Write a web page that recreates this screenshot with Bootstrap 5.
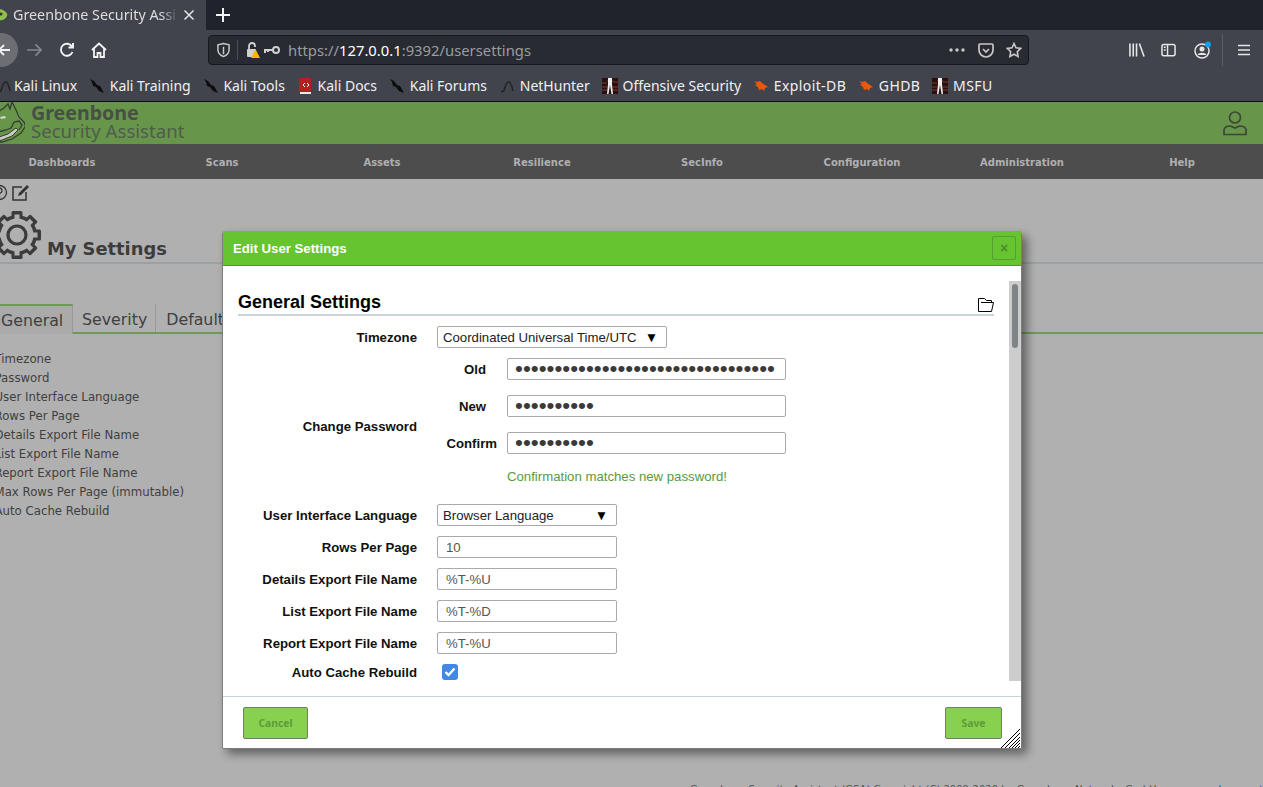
<!DOCTYPE html>
<html lang="en">
<head>
<meta charset="utf-8">
<title>Greenbone Security Assistant</title>
<link rel="stylesheet" href="https://cdn.jsdelivr.net/npm/bootstrap@5.3.0/dist/css/bootstrap.min.css">
<style>
html,body{height:787px;overflow:hidden;background:#b0b0b0}
body{font-family:"Liberation Sans",sans-serif;position:relative;color:#1a1a1a}
svg{display:block;flex:none}
.ffx{font-family:"Noto Sans",sans-serif;color:#f3f3f5}
.tabstrip{height:30px;background:#20232b}
.ftab{width:206px;height:30px;background:#42444d;font-size:14.3px;color:#ddd}
.ftab-title{width:165px;margin-left:3px;white-space:nowrap;overflow:hidden;-webkit-mask-image:linear-gradient(90deg,#000 90%,transparent);mask-image:linear-gradient(90deg,#000 90%,transparent)}
.tabclose{margin-left:5px}
.tabplus{margin-left:10px}
.ftoolbar{height:40px;background:#42444d}
.fleft{width:208px;flex:none}
.back-circle{width:34px;height:34px;flex:none;border-radius:50%;background:#6c6e74;margin-left:-16px;padding-right:8px}
.urlbar{width:821px;height:30px;background:#292b33;border:1px solid #17181d;border-radius:4px;font-size:14.8px;color:#9b9ca1}
.urlbar b{font-weight:400;color:#fff}
.urldiv{width:1px;height:20px;background:#4d4e55;margin-left:7px}
.ubicon-dots{margin-left:auto}
.ubicon-pocket{margin-left:13px}
.ubicon-star{margin-left:12px;margin-right:6px}
.tb-lib{margin-left:16px}
.tb-acct{margin-left:18px}
.tb-sep{width:1px;height:32px;background:#5c5d64;margin-left:10px}
.tb-menu{margin:0 13px 0 15px}
.bmarks{height:32px;background:#42444d;font-size:14px;border-bottom:1px solid #111;white-space:nowrap;color:#f0f0f2}
.bm-first{margin-left:-3px;margin-right:3px}
.bm-ico{margin-left:12px;margin-right:4.7px}
.bm-caps{letter-spacing:.4px}
.ghead{height:42px;background:#67964b}
.wolf{margin-right:6px}
.gname{font-family:"Noto Sans",sans-serif;white-space:nowrap}
.gnames{margin-top:-4px}
.gname-a{font-size:19.6px;line-height:20px;font-weight:700;color:#484f46}
.gname-b{font-size:18.6px;line-height:16px;color:#4f5c4a}
.guser{margin-right:15px}
.gmenu{height:35px;padding-top:1px;background:#4d4d4d;font:700 10px "DejaVu Sans",sans-serif;color:#b0b0b0}
.gmenu span{width:160px;flex:none;text-align:center}
.gmenu span:first-child{margin-left:-18px}
.pagearea{font-family:"DejaVu Sans",sans-serif;color:#404040}
.helprow{height:26px;margin-left:-9px}
.ttl{height:54px;margin-top:5px;border-bottom:2px solid #9aa0a3}
.gear{margin-left:-8px;margin-bottom:2px}
.ttl h1{font-size:17.85px;font-weight:700;margin:0 0 3px 5px;color:#3c3c3c}
.tabrow{height:30px;margin-top:40px;border-bottom:2px solid #6f9a55;font-size:15.8px}
.gtab{height:28px;padding:4px 8px 0 9px;border-right:1px solid #999;white-space:nowrap}
.gtab-on{width:73px;height:30px;padding:2px 0 0 1px;background:#aaa;border-top:2px solid #6f9a55;flex:none}
.gtab-last{padding-left:10px}
.setlist{margin:16px 0 0 -5.5px;font-size:11.75px;line-height:19px;color:#404040}
.gfoot{position:absolute;left:690px;top:784px;font:10px "DejaVu Sans",sans-serif;white-space:nowrap;color:#555}
.gfoot span{color:#3b4fb0}
.dlg{position:absolute;left:222px;top:231px;width:800px;height:518px;background:#fff;border:1px solid #7d7d7d;border-radius:3px 3px 0 0;box-shadow:5px 5px 10px rgba(0,0,0,.45);font-size:13.2px}
.dlg-h{height:35px;margin:-1px 0 0;background:#66c430;border-bottom:1px solid #777;color:#fff;font-weight:700;padding:0 5px 0 10px}
.dlg-ttl{padding-top:2px}
.xbtn{width:24px;height:24px;border:1px solid #569c33;border-radius:2px;color:#4b8e2a;font-size:14px;line-height:1}
.dlg-b{position:relative;height:430px;padding:0 27px 0 15px}
.sbar{position:absolute;right:0;top:15px;bottom:15px;width:12px;background:#cdcdcd}
.sthumb{width:6px;height:64px;margin-left:3px;position:relative;top:3px;border-radius:3px;background:#7f8486}
.sect{height:50px;margin-bottom:10px;border-bottom:2px solid #c8d3da}
.sect h2{font-size:18px;font-weight:700;margin:0;color:#000}
.sect svg{margin-bottom:2px}
.frow{min-height:22px;margin-bottom:10px}
.frow-chk{min-height:16px}
.pwblock{height:136px;margin-bottom:10px}
.pwcol{align-self:flex-start}
.flab{width:179px;flex:none;text-align:right;font-weight:700;margin-right:20px;color:#111;line-height:16px;padding-top:2px}
.frow-chk .flab{padding-top:1px}
.fake-sel,.finp{height:22px;border:1px solid #aaa;border-radius:2px;background:#fff;font-size:13.2px}
.fake-sel{padding:2px 8px 0 5px;color:#222}
.fake-sel i{font-style:normal;color:#000;font-size:13.5px;line-height:16px}
.finp{display:block;padding:0 8px;outline:0;font-family:"Liberation Sans",sans-serif;color:#555}
.finp-pw{font-size:22.5px;color:#3a3a3a;padding:0 7px}
.w180{width:180px}.w230{width:230px}.w279{width:279px}
.pwrow{height:22px;margin-bottom:15px}
.pwlab{width:60px;flex:none;text-align:right;font-weight:700;margin-right:10px;color:#111;line-height:16px;padding-top:2px}
.pwlab-in{padding-right:11px}
.okmsg{color:#569c38;margin:0 0 0 70px;line-height:15px}
.fake-chk{width:16px;height:16px;margin-left:5px;border-radius:3px;background:#4089e6}
.dlg-f{height:53px;border-top:1px solid #c8d3da;padding:10px 19px 0 20px;position:relative}
.gbtn{height:32px;background:#87d14f;border:1px solid #6f7f66;border-radius:2px;font:700 10.3px "Noto Sans",sans-serif;color:#5f9a3c}
.gbtn-c{width:65px}.gbtn-s{width:57px}
.grip{position:absolute;right:1px;bottom:1px}
</style>
</head>
<body>
<div class="tabstrip d-flex align-items-center ffx">
  <div class="ftab d-flex align-items-center">
    <svg width="10" height="16" viewBox="0 0 10 16"><path d="M-5 8C-5 3 0 1 3 3s5 3 4 6-5 5-8 4-1-3-4-5z" fill="#8fc04a"/><circle cx="1" cy="7" r="1.500" fill="#333"/></svg>
    <div class="ftab-title">Greenbone Security Assistant</div>
    <svg class="tabclose" width="12" height="12" viewBox="0 0 12 12"><path d="M1.500 1.500l9 9M10.500 1.500l-9 9" stroke="#e4e4e6" stroke-width="1.500"/></svg>
  </div>
  <svg class="tabplus" width="14" height="14" viewBox="0 0 14 14"><path d="M7 0v14M0 7h14" stroke="#f3f3f5" stroke-width="2"/></svg>
</div>
<div class="ftoolbar d-flex align-items-center ffx">
  <div class="fleft d-flex align-items-center">
    <div class="back-circle d-flex align-items-center justify-content-end">
      <svg width="12" height="12" viewBox="0 0 12 12"><path d="M6 1L1 6l5 5M1 6h11" fill="none" stroke="#f3f3f5" stroke-width="1.800"/></svg>
    </div>
    <svg class="ms-2" width="17" height="16" viewBox="0 0 18 16"><path d="M10 2l6 6-6 6M16 8H1" fill="none" stroke="#85868b" stroke-width="1.800"/></svg>
    <svg class="ms-3" width="16" height="16" viewBox="0 0 16 16"><path d="M13.500 10a6 6 0 1 1-.5-5.500M14 1v4.500H9.500" fill="none" stroke="#f3f3f5" stroke-width="1.900"/></svg>
    <svg class="ms-3" width="16" height="16" viewBox="0 0 16 16"><path d="M1 8l7-6.500L15 8M3 6.500V15h3.500v-4h3v4H13V6.500" fill="none" stroke="#f3f3f5" stroke-width="1.800"/></svg>
  </div>
  <div class="urlbar d-flex align-items-center">
    <svg class="ms-2" width="13" height="16" viewBox="0 0 14 16"><path d="M7 1l6 1.500v5c0 4-3 6.500-6 7.500-3-1-6-3.500-6-7.500v-5z M7 4.500v8" fill="none" stroke="#c8c8cb" stroke-width="1.600"/></svg>
    <span class="urldiv"></span>
    <svg class="ms-2" width="14" height="18" viewBox="0 0 14 18"><path d="M3 9V5a3 3 0 0 1 6 0v1" fill="none" stroke="#d0d0d3" stroke-width="1.800"/><rect x="1" y="8" width="9" height="8" rx="1" fill="#d0d0d3"/><path d="M9.500 8l4.500 9H5z" fill="#f5b800"/></svg>
    <svg class="ms-1" width="16" height="10" viewBox="0 0 16 10"><circle cx="12" cy="5" r="3" fill="none" stroke="#d0d0d3" stroke-width="2"/><path d="M9 5H1v3M4 5v2" fill="none" stroke="#d0d0d3" stroke-width="2"/></svg>
    <span class="ms-2">https://<b>127.0.0.1</b>:9392/usersettings</span>
    <svg class="ubicon-dots" width="16" height="4" viewBox="0 0 16 4"><circle cx="2" cy="2" r="1.700" fill="#c8c8cb"/><circle cx="8" cy="2" r="1.700" fill="#c8c8cb"/><circle cx="14" cy="2" r="1.700" fill="#c8c8cb"/></svg>
    <svg class="ubicon-pocket" width="16" height="16" viewBox="0 0 16 16"><path d="M2 2h12a1 1 0 0 1 1 1v5a7 7 0 0 1-14 0V3a1 1 0 0 1 1-1zM5 7l3 3 3-3" fill="none" stroke="#c8c8cb" stroke-width="1.700"/></svg>
    <svg class="ubicon-star" width="16" height="16" viewBox="0 0 16 16"><path d="M8 1.500l2 4.300 4.700.600-3.400 3.300.8 4.700L8 12.200l-4.100 2.200.8-4.700L1.300 6.400 6 5.800z" fill="none" stroke="#c8c8cb" stroke-width="1.600"/></svg>
  </div>
  <div class="ms-auto d-flex align-items-center">
    <svg width="16" height="14" viewBox="0 0 17 14"><path d="M1 0v14M4.500 0v14M8 0v14M11 0l5 14" stroke="#e6e6e8" stroke-width="1.700"/></svg>
    <svg class="tb-lib" width="15" height="14" viewBox="0 0 16 14"><rect x="1" y="1" width="14" height="12" rx="2" fill="none" stroke="#e6e6e8" stroke-width="1.600"/><path d="M7 1v12M3 4h2M3 7h2" stroke="#e6e6e8" stroke-width="1.500"/></svg>
    <svg class="tb-acct" width="18" height="18" viewBox="0 0 18 18"><circle cx="8" cy="10" r="7" fill="none" stroke="#e6e6e8" stroke-width="1.500"/><circle cx="8" cy="8" r="2.500" fill="#e6e6e8"/><path d="M3.500 14c1-3 8-3 9 0" fill="#e6e6e8"/><circle cx="14" cy="3.500" r="3" fill="#0a9ff0"/></svg>
    <span class="tb-sep"></span>
    <svg class="tb-menu" width="12" height="12" viewBox="0 0 12 12"><path d="M0 1.500h12M0 6h12M0 10.500h12" stroke="#e6e6e8" stroke-width="1.700"/></svg>
  </div>
</div>
<div class="bmarks d-flex align-items-center ffx">
  <svg class="bm-first" width="14" height="14" viewBox="0 0 14 14"><path d="M1 13l3-1c1-5 3-9 5-9s3 5 4 9" fill="none" stroke="#222" stroke-width="1.400"/></svg>
  <span>Kali Linux</span>
  <svg class="bm-ico" width="16" height="16" viewBox="0 0 16 16"><path d="M1 1l4 2 3 4 3 1 4 7-5-2-3-4-3-1-1-4z" fill="#0c0c0c"/></svg>
  <span>Kali Training</span>
  <svg class="bm-ico" width="16" height="16" viewBox="0 0 16 16"><path d="M1 1l4 2 3 4 3 1 4 7-5-2-3-4-3-1-1-4z" fill="#0c0c0c"/></svg>
  <span>Kali Tools</span>
  <svg class="bm-ico" width="16" height="16" viewBox="0 0 16 16"><rect x="2" y="0" width="12" height="15" rx="1" fill="#b3201f"/><rect x="3" y="14" width="11" height="2" fill="#e9e9e9"/><path d="M6 7l2-2M6 7l2 2M12 7l-2-2M12 7l-2 2" stroke="#fff" stroke-width="1"/></svg>
  <span>Kali Docs</span>
  <svg class="bm-ico" width="16" height="16" viewBox="0 0 16 16"><path d="M1 1l4 2 3 4 3 1 4 7-5-2-3-4-3-1-1-4z" fill="#0c0c0c"/></svg>
  <span>Kali Forums</span>
  <svg class="bm-ico" width="16" height="14" viewBox="0 0 14 14"><path d="M1 13l3-1c1-5 3-9 5-9s3 5 4 9" fill="none" stroke="#222" stroke-width="1.400"/></svg>
  <span>NetHunter</span>
  <svg class="bm-ico" width="16" height="16" viewBox="0 0 16 16"><rect width="16" height="16" fill="#2a0f0f"/><path d="M5 3h6v1h5M0 5h5M0 9h5M11 9h5M0 12h5M11 12h5" stroke="#7a3a3a" stroke-width="1"/><path d="M6 0h4v6l1 10H9.500L8 7l-1.500 9H5L6 6z" fill="#eee"/></svg>
  <span>Offensive Security</span>
  <svg class="bm-ico" width="16" height="14" viewBox="0 0 16 14"><path d="M1 2l3 1 3-1 2 2 6 4-3 1-1 3-2-2-3 1-1-3-3-2 2-1z" fill="#e8590c"/></svg>
  <span class="bm-caps">Exploit-DB</span>
  <svg class="bm-ico" width="16" height="14" viewBox="0 0 16 14"><path d="M1 2l3 1 3-1 2 2 6 4-3 1-1 3-2-2-3 1-1-3-3-2 2-1z" fill="#e8590c"/></svg>
  <span class="bm-caps">GHDB</span>
  <svg class="bm-ico" width="16" height="16" viewBox="0 0 16 16"><rect width="16" height="16" fill="#2a0f0f"/><path d="M5 3h6v1h5M0 5h5M0 9h5M11 9h5M0 12h5M11 12h5" stroke="#7a3a3a" stroke-width="1"/><path d="M6 0h4v6l1 10H9.500L8 7l-1.500 9H5L6 6z" fill="#eee"/></svg>
  <span class="bm-caps">MSFU</span>
</div>
<div class="ghead d-flex align-items-center">
  <svg class="wolf" width="25" height="42" viewBox="0 0 25 42"><path d="M-1 35l9-3 8-6 2 2-6 6-10 4-4 1z" fill="#c9cfc4" stroke="#353c30" stroke-width="1"/><path d="M-1 9L4 6 8 2l2 5 2-7 4 8 3 7 5 5 1.500 4-4.500 7-9 6-10 3H-2M-2 30l8-2 5-2 3-6 5-1 3 4-3 5" fill="none" stroke="#353c30" stroke-width="1.300"/><path d="M0 15l5-1 1 2-5 1z" fill="#d3d8cf"/></svg>
  <div class="gnames">
    <div class="gname gname-a">Greenbone</div>
    <div class="gname gname-b">Security Assistant</div>
  </div>
  <svg class="ms-auto guser" width="26" height="26" viewBox="0 0 26 26"><circle cx="13" cy="7.500" r="5.500" fill="none" stroke="#3e463a" stroke-width="1.700"/><path d="M2 24.500v-4c0-3 3-4.500 6.500-4.500l4.500 2 4.500-2c3.500 0 6.500 1.500 6.500 4.500v4z" fill="none" stroke="#3e463a" stroke-width="1.700"/></svg>
</div>
<div class="gmenu d-flex align-items-center">
  <span>Dashboards</span><span>Scans</span><span>Assets</span><span>Resilience</span><span>SecInfo</span><span>Configuration</span><span>Administration</span><span>Help</span>
</div>
<div class="pagearea">
  <div class="helprow d-flex align-items-center gap-1">
    <svg width="17" height="17" viewBox="0 0 17 17"><circle cx="8.500" cy="8.500" r="7" fill="none" stroke="#333" stroke-width="1.300"/><path d="M6 6.500a2.500 2.500 0 1 1 3.500 2.300c-.7.400-1 .9-1 1.700M8.500 12v1.500" fill="none" stroke="#333" stroke-width="1.300"/></svg>
    <svg width="17" height="17" viewBox="0 0 17 17"><path d="M10 3H1v13h13V8" fill="none" stroke="#333" stroke-width="1.500"/><path d="M15 1L7 9l-1 3 3-1 8-8z" fill="#333"/></svg>
  </div>
  <div class="ttl d-flex align-items-end">
    <svg class="gear" width="50" height="50" viewBox="0 0 50 50">
      <g fill="#3c3c3c"><circle cx="25" cy="25" r="20"/><rect x="19.500" y="1" width="11" height="48" rx="1.500"/><rect x="19.500" y="1" width="11" height="48" rx="1.500" transform="rotate(45 25 25)"/><rect x="19.500" y="1" width="11" height="48" rx="1.500" transform="rotate(90 25 25)"/><rect x="19.500" y="1" width="11" height="48" rx="1.500" transform="rotate(135 25 25)"/></g>
      <g fill="#b0b0b0"><circle cx="25" cy="25" r="16.500"/><rect x="22.500" y="4.500" width="5" height="41"/><rect x="22.500" y="4.500" width="5" height="41" transform="rotate(45 25 25)"/><rect x="22.500" y="4.500" width="5" height="41" transform="rotate(90 25 25)"/><rect x="22.500" y="4.500" width="5" height="41" transform="rotate(135 25 25)"/></g>
      <circle cx="25" cy="25" r="9" fill="none" stroke="#3c3c3c" stroke-width="3.200"/>
    </svg>
    <h1>My Settings</h1>
  </div>
  <div class="tabrow d-flex">
    <div class="gtab gtab-on d-flex align-items-center">General</div>
    <div class="gtab d-flex align-items-center">Severity</div>
    <div class="gtab gtab-last d-flex align-items-center">Defaults</div>
  </div>
  <div class="setlist">
    <div>Timezone</div><div>Password</div><div>User Interface Language</div><div>Rows Per Page</div><div>Details Export File Name</div><div>List Export File Name</div><div>Report Export File Name</div><div>Max Rows Per Page (immutable)</div><div>Auto Cache Rebuild</div>
  </div>
</div>
<div class="gfoot">Greenbone Security Assistant (GSA) Copyright (C) 2009-2020 by Greenbone Networks GmbH, <span>www.greenbone.net</span></div>

<div class="dlg">
  <div class="dlg-h d-flex align-items-center justify-content-between">
    <span class="dlg-ttl">Edit User Settings</span>
    <div class="xbtn d-flex align-items-center justify-content-center">×</div>
  </div>
  <div class="dlg-b">
    <div class="sbar"><div class="sthumb"></div></div>
    <div class="sect d-flex align-items-end justify-content-between">
      <h2>General Settings</h2>
      <svg width="16" height="14" viewBox="0 0 16 14"><path d="M.5 13.500V.5h6l2 2h5v2M.5 13.500h13l2-9H3" fill="none" stroke="#000"/></svg>
    </div>
    <div class="frow d-flex align-items-center"><div class="flab">Timezone</div><div class="fake-sel w230 d-flex align-items-center justify-content-between"><span>Coordinated Universal Time/UTC</span><i>▼</i></div></div>
    <div class="pwblock d-flex align-items-center">
      <div class="flab">Change Password</div>
      <div class="pwcol">
        <div class="pwrow d-flex align-items-center"><div class="pwlab pwlab-in">Old</div><input class="finp finp-pw w279" type="password" value="aaaaaaaaaaaaaaaaaaaaaaaaaaaaaaaaa" aria-label="Old"></div>
        <div class="pwrow d-flex align-items-center"><div class="pwlab pwlab-in">New</div><input class="finp finp-pw w279" type="password" value="aaaaaaaaaa" aria-label="New"></div>
        <div class="pwrow d-flex align-items-center"><div class="pwlab">Confirm</div><input class="finp finp-pw w279" type="password" value="aaaaaaaaaa" aria-label="Confirm"></div>
        <div class="okmsg">Confirmation matches new password!</div>
      </div>
    </div>
    <div class="frow d-flex align-items-center"><div class="flab">User Interface Language</div><div class="fake-sel w180 d-flex align-items-center justify-content-between"><span>Browser Language</span><i>▼</i></div></div>
    <div class="frow d-flex align-items-center"><div class="flab">Rows Per Page</div><input class="finp w180" value="10" aria-label="Rows Per Page"></div>
    <div class="frow d-flex align-items-center"><div class="flab">Details Export File Name</div><input class="finp w180" value="%T-%U" aria-label="Details Export File Name"></div>
    <div class="frow d-flex align-items-center"><div class="flab">List Export File Name</div><input class="finp w180" value="%T-%D" aria-label="List Export File Name"></div>
    <div class="frow d-flex align-items-center"><div class="flab">Report Export File Name</div><input class="finp w180" value="%T-%U" aria-label="Report Export File Name"></div>
    <div class="frow frow-chk d-flex align-items-start"><div class="flab">Auto Cache Rebuild</div><div class="fake-chk d-flex align-items-center justify-content-center"><svg width="12" height="10" viewBox="0 0 12 10"><path d="M1.500 5l3 3 6-6.500" fill="none" stroke="#fff" stroke-width="2.400"/></svg></div></div>
  </div>
  <div class="dlg-f d-flex justify-content-between align-items-start">
    <div class="gbtn gbtn-c d-flex align-items-center justify-content-center">Cancel</div>
    <div class="gbtn gbtn-s d-flex align-items-center justify-content-center">Save</div>
    <svg class="grip" width="19" height="19" viewBox="0 0 19 19"><path d="M0 19L19 0M4 19L19 4M8 19L19 8M11 19l8-8M14 19l5-5M17 19l2-2" stroke="#000" stroke-width="1"/></svg>
  </div>
</div>
</body>
</html>
